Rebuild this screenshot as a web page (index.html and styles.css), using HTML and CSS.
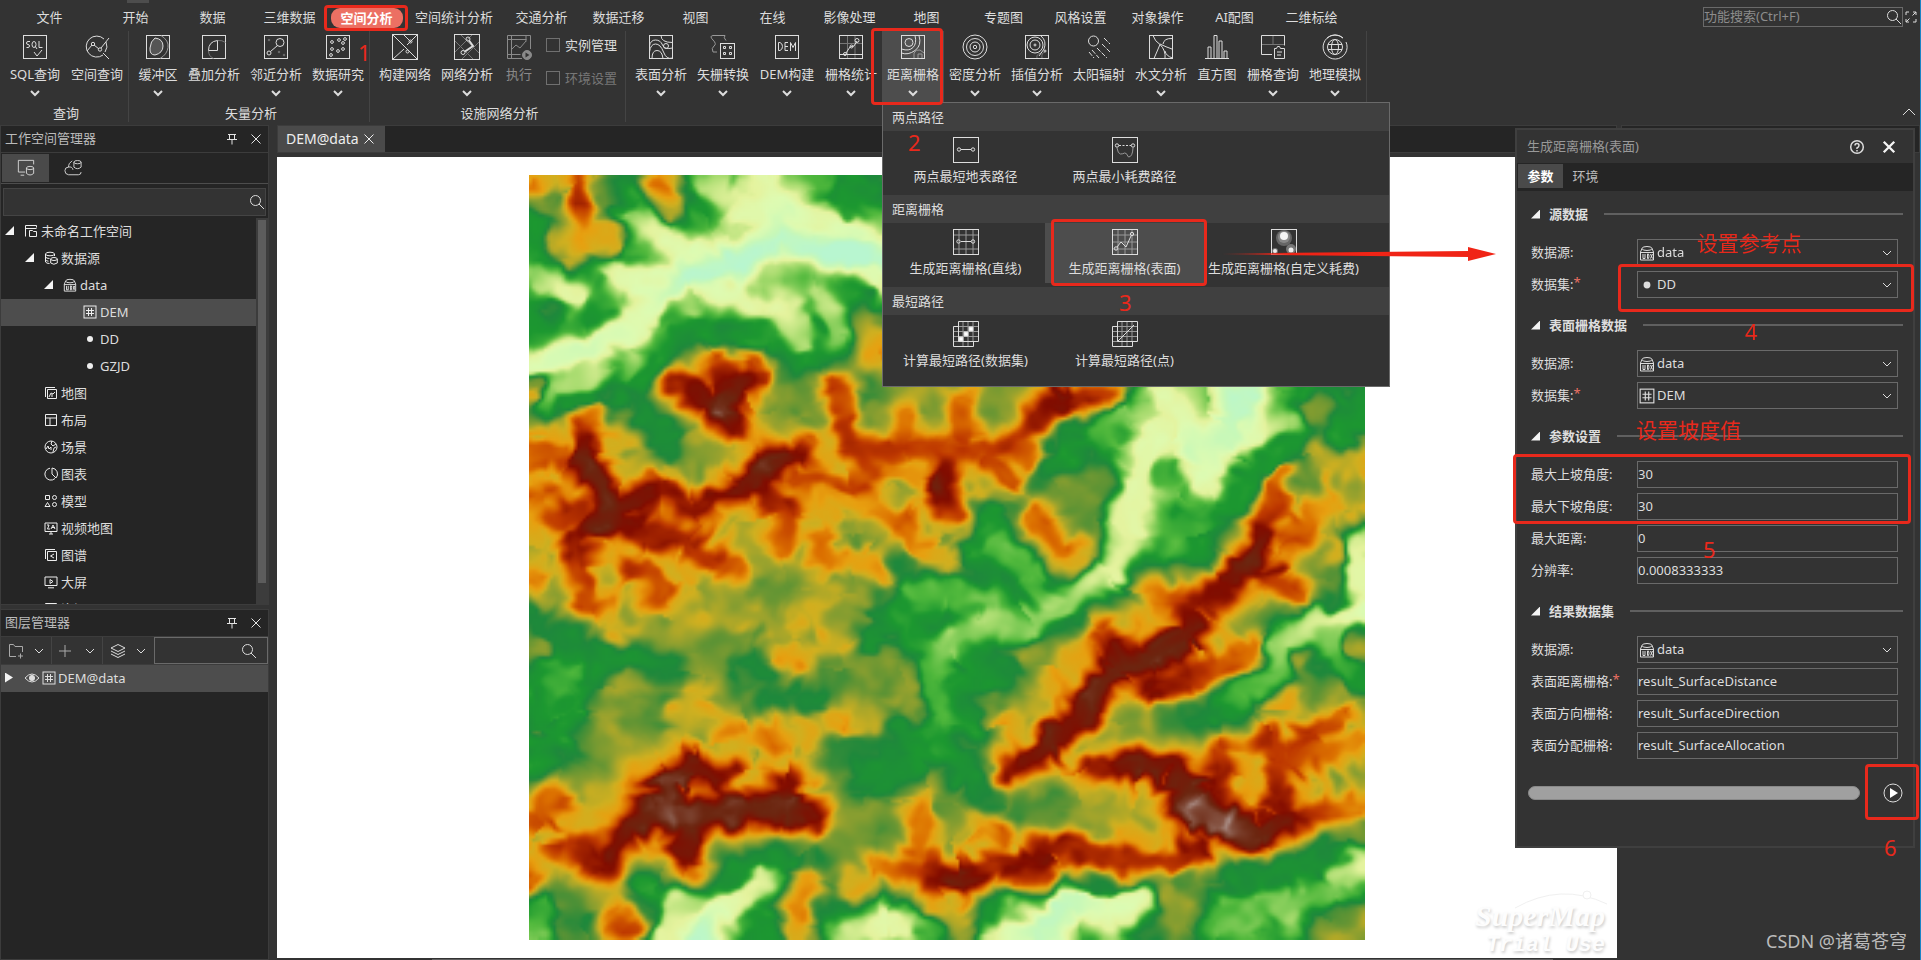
FILE: index.html
```html
<!DOCTYPE html>
<html lang="zh-CN">
<head>
<meta charset="utf-8">
<title>SuperMap iDesktopX</title>
<link rel="stylesheet" href="styles.css">
</head>
<body>
<svg class="sprite" aria-hidden="true">
  <symbol id="i-sql" viewBox="0 0 26 26"><rect x="1.500" y="1.500" width="23" height="23"/><path d="M8 7.500H6q-1.500 0-1.500 1.500T6 10.500 7.500 12 6 13.500H4.500M12 7.500q2 0 2 3t-2 3-2-3 2-3M13 12l2 3M17 7v6.500h3.500M12 18l3 4 5-6"/></symbol>
  <symbol id="i-spaceq" viewBox="0 0 26 26"><path d="M20 5A10.500 10.500 0 1 0 19 21M22 8a10 10 0 0 1-1 10M19 19l6 6M3 17l5-6M10 11l5 4M17 14l8-10"/><circle cx="9" cy="10" r="1.700"/><circle cx="16" cy="15.500" r="1.700"/></symbol>
  <symbol id="i-buffer" viewBox="0 0 26 26"><rect x="1.500" y="1.500" width="23" height="23"/><path d="M16 1.500q8 5 7 12t-8 11" class="dimmer"/><path d="M10 4q8 1 8 8t-8 9Q4.500 21 5 14t5-10z" class="shade"/></symbol>
  <symbol id="i-overlay" viewBox="0 0 26 26"><rect x="1.500" y="1.500" width="23" height="23"/><path d="M16.500 6.500v10h-9q0-9 9-10z"/><path d="M7.500 17q0 5 5 7.500M17 6.500q4-.5 7.500 2" class="dim"/></symbol>
  <symbol id="i-near" viewBox="0 0 26 26"><rect x="1.500" y="1.500" width="23" height="23"/><circle cx="17" cy="8.500" r="4"/><circle cx="6" cy="19" r="2"/><path d="M7.500 17.500l7-6"/><g class="dim"><circle cx="6" cy="6" r=".8"/><circle cx="16" cy="18" r=".8"/><circle cx="21" cy="21" r=".8"/></g></symbol>
  <symbol id="i-study" viewBox="0 0 26 26"><rect x="1.500" y="1.500" width="23" height="23"/><circle cx="7" cy="8" r="1.400"/><circle cx="14" cy="6" r="1.400"/><circle cx="20" cy="5" r="1.400"/><circle cx="18" cy="9" r="1.400"/><circle cx="7" cy="15" r="1.400"/><circle cx="13" cy="17" r="1.400"/><circle cx="18" cy="15" r="1.400"/><circle cx="6" cy="21" r="1.400"/></symbol>
  <symbol id="i-buildnet" viewBox="0 0 26 26"><rect x=".5" y=".5" width="25" height="25"/><path d="M1 1l24 24M25 1L15 11M12 15L1 25M12 1l6 6"/><circle cx="18.500" cy="7.500" r="1.500"/><circle cx="15.500" cy="17.500" r="1.500"/></symbol>
  <symbol id="i-netana" viewBox="0 0 26 26"><path d="M1 7l18 18M1 18L18 1M7 1l18 18M8 25L25 8" class="dim"/><rect x=".5" y=".5" width="25" height="25"/><path d="M15 6.500l4 5.500-8 5.500" class="bold"/><circle cx="14" cy="5" r="2"/><circle cx="9" cy="18.500" r="2"/></symbol>
  <symbol id="i-exec" viewBox="0 0 26 26"><path d="M16 24.500H1.500v-23h23V15M5.500 1.500v23M1.500 5.500h19M20 1.500v6M1.500 20.500h13M6 15l4-4 4 3 6-7"/><circle cx="21" cy="21" r="4.500" fill="currentColor"/><path d="M19.500 18.500l4 2.500-4 2.500z" fill="#333" stroke="none"/></symbol>
  <symbol id="i-surface" viewBox="0 0 26 26"><rect x="1.500" y="1.500" width="23" height="23"/><path d="M1.500 12q1-6 6-6t7 5 10 3M1.500 18q1-8 6-8t8 8 9 6M4 24.500q0-8 5-8t6 8M13 1.500q0 7 11.500 7"/><circle cx="18" cy="12" r="2.500"/></symbol>
  <symbol id="i-convert" viewBox="0 0 26 26"><path d="M7 18H3q-2-4 1-6T3 6t0-4.500h12q-2 2 1 5" class="dimmer"/><rect x="10.500" y="9.500" width="14" height="15"/><path d="M13.500 12.500h2v2h-2zM19.500 12.500h2v2h-2zM13.500 18.500h2v2h-2zM19.500 18.500h2v2h-2z"/></symbol>
  <symbol id="i-dem" viewBox="0 0 26 26"><rect x="1.500" y="1.500" width="23" height="23"/><path d="M4.500 8.500v8h1.500q2.500-1 2.500-4t-2.500-4zM14 8.500h-3v8h3M11 12.500h3M16.500 17V8.500l2.500 5 2.500-5V17"/></symbol>
  <symbol id="i-stat" viewBox="0 0 26 26"><path d="M9.500 2v22M2 9.500h22M17 2v22" class="dim"/><rect x="1.500" y="1.500" width="23" height="23"/><path d="M1.500 20.500h23M8 19l4-6 4-1 3-5"/><circle cx="7" cy="20" r="1.500"/><circle cx="13.500" cy="12.500" r="1.500"/><circle cx="19" cy="6.500" r="2"/></symbol>
  <symbol id="i-dist" viewBox="0 0 26 26"><path d="M14 24v-5q2-4 6-3l4 3M18 24v-4h4v4" class="dimmer"/><rect x="1.500" y="1.500" width="23" height="23"/><circle cx="9" cy="8.500" r="4" class="shade"/><path d="M15 1.500q2 8-2 12T1.500 15M19 1.500q3 10-4 15T1.500 19"/></symbol>
  <symbol id="i-density" viewBox="0 0 26 26"><circle cx="13" cy="13" r="12"/><circle cx="13" cy="13" r="8.500"/><circle cx="13" cy="13" r="5"/><circle cx="13" cy="13" r="1.700"/></symbol>
  <symbol id="i-interp" viewBox="0 0 26 26"><path d="M18 24q-1-5 3-6M13 24q-1-4 4-5" class="dim"/><rect x="1.500" y="1.500" width="23" height="23"/><circle cx="11" cy="11" r="8"/><circle cx="11" cy="11" r="5"/><circle cx="11" cy="11" r="1"/><path d="M17 2q6 5 3 13l-5 7"/><circle cx="21" cy="17" r="1"/></symbol>
  <symbol id="i-sun" viewBox="0 0 26 26"><circle cx="7.500" cy="7" r="5"/><path d="M18 4l6 6M16 10l8 8M11 14l10 10M6 16l7 8M3 18l5 6" stroke-dasharray="5 1.500"/></symbol>
  <symbol id="i-hydro" viewBox="0 0 26 26"><rect x="1.500" y="1.500" width="23" height="23"/><path d="M5 1.500q2 6 7 9l-6 14M12 10.500q6 6 5 14M12 10q6 3 12 5M15 10q1-6 9.500-5.500M17 17q1 5 7.500 7"/></symbol>
  <symbol id="i-histo" viewBox="0 0 26 26"><path d="M1 24.500h24M4 24V13h3v11M10 24V1.500h3V24M15 24V7h3v17M20 24v-7h3v7"/></symbol>
  <symbol id="i-rquery" viewBox="0 0 26 26"><path d="M13 2v9M2 10.500h22" class="dim"/><path d="M12 20.500H1.500v-19h23v10M14.500 14.500h2l1-2h2l1 2h4v10h-10zM17 18h5M17 21h4"/></symbol>
  <symbol id="i-geosim" viewBox="0 0 26 26"><path d="M21 4A12 12 0 1 0 24 8M5 4a12 12 0 0 1 16 0"/><circle cx="13" cy="13" r="7.500"/><ellipse cx="13" cy="13" rx="3.500" ry="7.500"/><path d="M6 10.500h14M6 15.500h14"/></symbol>
  <symbol id="i-chev" viewBox="0 0 12 12"><path d="M2 4l4 4 4-4"/></symbol>
  <symbol id="i-search" viewBox="0 0 16 16"><circle cx="6.500" cy="6.500" r="5"/><path d="M10 10l5 5"/></symbol>
  <symbol id="i-x" viewBox="0 0 12 12"><path d="M1.500 1.500l9 9M10.500 1.500l-9 9"/></symbol>
  <symbol id="i-pin" viewBox="0 0 12 12"><path d="M2 1.500h8M3.500 1.500v5M8.500 1.500v5M1 6.500h10M6 6.500v5"/></symbol>
  <symbol id="i-plus" viewBox="0 0 12 12"><path d="M6 0v12M0 6h12"/></symbol>
  <symbol id="i-expand" viewBox="0 0 12 12"><path d="M1 4V1h3M8 1h3v3M11 8v3H8M4 11H1V8M1 11l3.500-3.500M11 1L7.500 4.500"/></symbol>
  <symbol id="i-wsp" viewBox="0 0 14 14"><path d="M1.500 12.500v-11h11v2M1.500 4.500h11M5.500 12.500v-6h3l1 1h3v5z"/></symbol>
  <symbol id="i-dbs" viewBox="0 0 14 14"><ellipse cx="6" cy="3" rx="4.500" ry="1.800"/><path d="M1.500 3v8q1 1.500 4 1.500M1.500 6q1 1.500 4 1.500M1.500 9q1 1 3 1.200M10.500 3v2"/><ellipse cx="10" cy="8" rx="3.300" ry="1.500"/><path d="M6.700 8v4q3 2.500 6.600 0V8"/></symbol>
  <symbol id="i-udb" viewBox="0 0 16 16"><ellipse cx="8" cy="3.500" rx="5" ry="2"/><path d="M3 3.500L1.500 7v8h13V7L13 3.500M1.500 7.500h13M4 9v4.500h2V9M8.500 9v4.500M8.500 9h1q1 2.200 0 4.500h-1M11.500 9l2 4.500M13.500 9l-2 4.500"/></symbol>
  <symbol id="i-grid" viewBox="0 0 14 14"><rect x="1" y="1" width="12" height="12"/><path d="M5.500 3v8M8.500 3v8M3 5.500h8M3 8.500h8"/></symbol>
  <symbol id="i-dot" viewBox="0 0 14 14"><circle cx="7" cy="7" r="3" fill="currentColor" stroke="none"/></symbol>
  <symbol id="i-map" viewBox="0 0 14 14"><path d="M1.500 11V1.500H11M3.500 3.500h9v9h-9zM5 11l2-4 2 1 2-2M8 11v-3"/></symbol>
  <symbol id="i-layout" viewBox="0 0 14 14"><path d="M1.500 1.500h11v11h-11zM1.500 5h11M6 5v7.500"/></symbol>
  <symbol id="i-scene" viewBox="0 0 14 14"><circle cx="7" cy="7" r="6"/><path d="M2 9l2-3 1 3 2-2v3M8 1l-1 3 2 2 3-2M9 12l1-4 2-1"/></symbol>
  <symbol id="i-chart" viewBox="0 0 14 14"><path d="M6 1.200A6 6 0 1 0 11 11.500M8 1v6l4 4a6 6 0 0 0-4-10z"/></symbol>
  <symbol id="i-model" viewBox="0 0 14 14"><path d="M1.500 1.500h4v4h-4zM3.500 8.500l2.500 4H1z"/><circle cx="10.500" cy="3.500" r="2"/><circle cx="10.500" cy="10.500" r="2"/></symbol>
  <symbol id="i-video" viewBox="0 0 14 14"><path d="M1 2h12v8.500H1zM5 13h4M3 4h2L3.500 8H6M7 8l2-4 2 4M8 6.500h3M7 10.500V13"/></symbol>
  <symbol id="i-graph" viewBox="0 0 14 14"><path d="M1.500 11V1.500H11M3.500 3.500h9v9h-9zM10 6L6.500 8l3.500 2"/></symbol>
  <symbol id="i-screen" viewBox="0 0 14 14"><path d="M1 2h12v8.500H1zM4 12.800h6M6 4.500v4l3-2z"/></symbol>
  <symbol id="i-folder" viewBox="0 0 16 16"><path d="M8 13.500H1.500v-12h4l1.500 2h7.500V9M12.500 10.500v5M10 13h5"/></symbol>
  <symbol id="i-layers" viewBox="0 0 16 16"><path d="M8 1.500L15 5 8 8.500 1 5zM1 8l7 3.500L15 8M1 11l7 3.500 7-3.500"/></symbol>
  <symbol id="i-eye" viewBox="0 0 16 16"><path d="M1 8q7-8 14 0-7 8-14 0z"/><circle cx="8" cy="8" r="2.600" fill="currentColor"/></symbol>
  <symbol id="i-local" viewBox="0 0 20 20"><path d="M9 14.500H1.500v-13h17V6M4 18h4"/><ellipse cx="14.500" cy="10" rx="4" ry="1.800"/><path d="M10.500 10v6q4 3.500 8 0v-6"/></symbol>
  <symbol id="i-cloud" viewBox="0 0 20 20"><path d="M6 5q-1 2-1 4-4 0-4 4t4 4.500h11q3 0 3-3M5 9q4-1 5 3M6 5l3-3"/><ellipse cx="15" cy="3.500" rx="4" ry="1.800"/><path d="M11 3.500V9q4 3.500 8 0V3.500"/></symbol>
  <symbol id="i-tp1" viewBox="0 0 26 26"><rect x=".5" y=".5" width="25" height="25"/><path d="M8 12.500h10"/><circle cx="6" cy="12.500" r="1.700"/><circle cx="20" cy="12.500" r="1.700"/></symbol>
  <symbol id="i-tp2" viewBox="0 0 26 26"><rect x=".5" y=".5" width="25" height="25"/><path d="M7 8.500h12" stroke-dasharray="2 1.500"/><circle cx="5" cy="8.500" r="1.700"/><circle cx="21" cy="8.500" r="1.700"/><path d="M5 11q1 6 3.500 6t4-1 4 4q4 0 4.500-9" class="dimmer"/></symbol>
  <symbol id="i-g1" viewBox="0 0 26 26"><path d="M6 1v24M13 1v24M20 1v24M1 6h24M1 20h24" class="dimmer"/><rect x=".5" y=".5" width="25" height="25"/><path d="M8 12.500h10"/><circle cx="5.500" cy="12.500" r="1.700"/><circle cx="20" cy="12.500" r="1.700"/></symbol>
  <symbol id="i-g2" viewBox="0 0 26 26"><path d="M6 1v24M13 1v24M20 1v24M1 6h24M1 13h24M1 20h24" class="dimmer"/><rect x=".5" y=".5" width="25" height="25"/><path d="M5 18l4-5 5 5 5-11"/><circle cx="4" cy="19.500" r="1.700"/><circle cx="20" cy="5" r="1.700"/></symbol>
  <symbol id="i-g3" viewBox="0 0 26 26"><rect x=".5" y=".5" width="25" height="25"/><g stroke="none"><circle cx="13" cy="9" r="8" fill="#666"/><circle cx="13" cy="8" r="6" fill="#888"/><circle cx="13" cy="7" r="4" fill="#f4f4f4"/><circle cx="20" cy="20" r="5" fill="#777"/><circle cx="20" cy="21" r="2.500" fill="#eee"/><circle cx="4" cy="22" r="3" fill="#777"/><circle cx="4" cy="22" r="2" fill="#eee"/></g></symbol>
  <symbol id="i-s1" viewBox="0 0 26 26"><path d="M10 1v19M15 1v24M20 1v19M5 5.500h20M1 10.500h24M1 15.500h24M10 20v5M1 20.500h6" class="dimmer"/><path d="M5.500.5h20v20h-20zM5.500 5.500h-5v20h20v-5"/><path d="M16 6h4v4h-4zM11 11h4v4h-4zM6 16h4v4H6z" fill="#fff"/></symbol>
  <symbol id="i-s2" viewBox="0 0 26 26"><path d="M10 1v19M15 1v24M20 1v19M5 5.500h20M1 10.500h24M1 15.500h24M10 20v5M1 20.500h6" class="dimmer"/><path d="M5.500.5h20v20h-20zM5.500 5.500h-5v20h20v-5M6 20L22 4"/></symbol>
</svg>

<div class="app">
  <header class="ribbon">
    <div class="titlebar">
      <nav class="tabs">
        <a class="tab tab-file" href="#">文件</a><a class="tab" href="#">开始</a><a class="tab" href="#">数据</a><a class="tab" href="#">三维数据</a><a class="tab active" href="#"><span>空间分析</span></a><a class="tab tab-wide" href="#">空间统计分析</a><a class="tab" href="#">交通分析</a><a class="tab" href="#">数据迁移</a><a class="tab" href="#">视图</a><a class="tab" href="#">在线</a><a class="tab" href="#">影像处理</a><a class="tab" href="#">地图</a><a class="tab" href="#">专题图</a><a class="tab" href="#">风格设置</a><a class="tab" href="#">对象操作</a><a class="tab" href="#">AI配图</a><a class="tab" href="#">二维标绘</a>
      </nav>
      <div class="find"><input type="text" aria-label="功能搜索" placeholder="功能搜索(Ctrl+F)"><svg class="ic16"><use href="#i-search"/></svg></div>
      <button class="bare" aria-label="全屏"><svg class="ic12"><use href="#i-expand"/></svg></button>
    </div>
    <div class="groups">
      <section class="group query">
        <div class="tools">
          <button class="tool"><svg><use href="#i-sql"/></svg><span>SQL查询</span><svg class="chev"><use href="#i-chev"/></svg></button>
          <button class="tool"><svg><use href="#i-spaceq"/></svg><span>空间查询</span></button>
        </div>
        <h2>查询</h2>
      </section>
      <section class="group">
        <div class="tools">
          <button class="tool t3"><svg><use href="#i-buffer"/></svg><span>缓冲区</span><svg class="chev"><use href="#i-chev"/></svg></button>
          <button class="tool"><svg><use href="#i-overlay"/></svg><span>叠加分析</span></button>
          <button class="tool"><svg><use href="#i-near"/></svg><span>邻近分析</span><svg class="chev"><use href="#i-chev"/></svg></button>
          <button class="tool"><svg><use href="#i-study"/></svg><span>数据研究</span><svg class="chev"><use href="#i-chev"/></svg></button>
        </div>
        <h2>矢量分析</h2>
      </section>
      <section class="group">
        <div class="tools">
          <button class="tool"><svg><use href="#i-buildnet"/></svg><span>构建网络</span></button>
          <button class="tool"><svg><use href="#i-netana"/></svg><span>网络分析</span><svg class="chev"><use href="#i-chev"/></svg></button>
          <button class="tool t2" disabled><svg><use href="#i-exec"/></svg><span>执行</span></button>
          <div class="checks">
            <label><input type="checkbox">实例管理</label>
            <label class="off"><input type="checkbox" disabled>环境设置</label>
          </div>
        </div>
        <h2>设施网络分析</h2>
      </section>
      <section class="group">
        <div class="tools">
          <button class="tool"><svg><use href="#i-surface"/></svg><span>表面分析</span><svg class="chev"><use href="#i-chev"/></svg></button>
          <button class="tool"><svg><use href="#i-convert"/></svg><span>矢栅转换</span><svg class="chev"><use href="#i-chev"/></svg></button>
          <button class="tool t5"><svg><use href="#i-dem"/></svg><span>DEM构建</span><svg class="chev"><use href="#i-chev"/></svg></button>
          <button class="tool"><svg><use href="#i-stat"/></svg><span>栅格统计</span><svg class="chev"><use href="#i-chev"/></svg></button>
          <div class="drop">
            <button class="tool open"><svg><use href="#i-dist"/></svg><span>距离栅格</span><svg class="chev"><use href="#i-chev"/></svg></button>
            <div class="mark mark-drop"></div>
            <div class="menu">
              <h3>两点路径</h3>
              <div class="choices">
                <button><svg><use href="#i-tp1"/></svg><span>两点最短地表路径</span></button>
                <button><svg><use href="#i-tp2"/></svg><span>两点最小耗费路径</span></button>
              </div>
              <h3>距离栅格</h3>
              <div class="choices">
                <button><svg><use href="#i-g1"/></svg><span>生成距离栅格(直线)</span></button>
                <button class="hover"><svg><use href="#i-g2"/></svg><span>生成距离栅格(表面)</span></button>
                <button><svg><use href="#i-g3"/></svg><span>生成距离栅格(自定义耗费)</span></button>
              </div>
              <h3>最短路径</h3>
              <div class="choices">
                <button><svg><use href="#i-s1"/></svg><span>计算最短路径(数据集)</span></button>
                <button><svg><use href="#i-s2"/></svg><span>计算最短路径(点)</span></button>
              </div>
              <div class="mark mark-item"></div>
              <b class="num n2">2</b><b class="num n3">3</b>
              <svg class="arrow" viewBox="0 0 274 16"><defs><linearGradient id="fade"><stop offset="0" stop-color="#f02416" stop-opacity="0"/><stop offset=".25" stop-color="#f02416"/></linearGradient></defs><path d="M0 7.500L246 5V1l28 7-28 7v-4L0 8.500z" fill="url(#fade)"/></svg>
            </div>
          </div>
          <button class="tool"><svg><use href="#i-density"/></svg><span>密度分析</span><svg class="chev"><use href="#i-chev"/></svg></button>
          <button class="tool"><svg><use href="#i-interp"/></svg><span>插值分析</span><svg class="chev"><use href="#i-chev"/></svg></button>
          <button class="tool"><svg><use href="#i-sun"/></svg><span>太阳辐射</span></button>
          <button class="tool"><svg><use href="#i-hydro"/></svg><span>水文分析</span><svg class="chev"><use href="#i-chev"/></svg></button>
          <button class="tool t3"><svg><use href="#i-histo"/></svg><span>直方图</span></button>
          <button class="tool"><svg><use href="#i-rquery"/></svg><span>栅格查询</span><svg class="chev"><use href="#i-chev"/></svg></button>
          <button class="tool"><svg><use href="#i-geosim"/></svg><span>地理模拟</span><svg class="chev"><use href="#i-chev"/></svg></button>
        </div>
      </section>
      <button class="bare collapse" aria-label="折叠"><svg class="ic16" viewBox="0 0 16 16"><path d="M2 11l6-6 6 6"/></svg></button>
    </div>
    <div class="mark mark-tab"></div>
    <b class="num n1">1</b>
  </header>

  <div class="work">
    <aside class="side">
      <section class="panel">
        <div class="phead"><h2>工作空间管理器</h2><button class="bare" aria-label="固定"><svg class="ic12"><use href="#i-pin"/></svg></button><button class="bare" aria-label="关闭"><svg class="ic12"><use href="#i-x"/></svg></button></div>
        <div class="ptabs"><button class="on" aria-label="本地"><svg><use href="#i-local"/></svg></button><button aria-label="在线"><svg><use href="#i-cloud"/></svg></button></div>
        <div class="psearch"><input type="text" aria-label="搜索"><svg class="ic16"><use href="#i-search"/></svg></div>
        <div class="treebox">
          <ul class="tree">
            <li><i class="tri"></i><svg><use href="#i-wsp"/></svg>未命名工作空间</li>
            <li class="l1"><i class="tri"></i><svg><use href="#i-dbs"/></svg>数据源</li>
            <li class="l2"><i class="tri"></i><svg><use href="#i-udb"/></svg>data</li>
            <li class="l3 picked"><i></i><svg><use href="#i-grid"/></svg>DEM</li>
            <li class="l3"><i></i><svg><use href="#i-dot"/></svg>DD</li>
            <li class="l3"><i></i><svg><use href="#i-dot"/></svg>GZJD</li>
            <li class="l1"><i></i><svg><use href="#i-map"/></svg>地图</li>
            <li class="l1"><i></i><svg><use href="#i-layout"/></svg>布局</li>
            <li class="l1"><i></i><svg><use href="#i-scene"/></svg>场景</li>
            <li class="l1"><i></i><svg><use href="#i-chart"/></svg>图表</li>
            <li class="l1"><i></i><svg><use href="#i-model"/></svg>模型</li>
            <li class="l1"><i></i><svg><use href="#i-video"/></svg>视频地图</li>
            <li class="l1"><i></i><svg><use href="#i-graph"/></svg>图谱</li>
            <li class="l1"><i></i><svg><use href="#i-screen"/></svg>大屏</li>
            <li class="l1"><i class="tri"></i><svg><use href="#i-wsp"/></svg>资源</li>
          </ul>
          <div class="track"><div class="thumb"></div></div>
        </div>
      </section>
      <section class="panel layers">
        <div class="phead"><h2>图层管理器</h2><button class="bare" aria-label="固定"><svg class="ic12"><use href="#i-pin"/></svg></button><button class="bare" aria-label="关闭"><svg class="ic12"><use href="#i-x"/></svg></button></div>
        <div class="ltools">
          <button aria-label="新建分组"><svg class="ic16 soft"><use href="#i-folder"/></svg><svg class="ic12"><use href="#i-chev"/></svg></button>
          <button aria-label="添加"><svg class="ic12 soft"><use href="#i-plus"/></svg><svg class="ic12"><use href="#i-chev"/></svg></button>
          <button aria-label="图层"><svg class="ic16"><use href="#i-layers"/></svg><svg class="ic12"><use href="#i-chev"/></svg></button>
          <div class="lsearch"><input type="text" aria-label="图层搜索"><svg class="ic16"><use href="#i-search"/></svg></div>
        </div>
        <div class="layer"><i></i><svg class="ic16"><use href="#i-eye"/></svg><svg class="ic14"><use href="#i-grid"/></svg><span>DEM@data</span></div>
      </section>
    </aside>

    <main class="doc">
      <div class="dtabs"><button>DEM@data <svg class="ic12"><use href="#i-x"/></svg></button></div>
      <div class="canvas">
        <canvas id="terrain" width="280" height="256"></canvas>
        <div class="brand"><svg viewBox="0 0 100 20"><path d="M4 18Q50-8 96 14"/><circle cx="76" cy="5" r="4"/></svg><em>SuperMap</em><b>Trial Use</b></div>
      </div>
    </main>
    <aside class="right"><div></div></aside>
  </div>

  <form class="dialog">
    <div class="dtitle"><h2>生成距离栅格(表面)</h2>
      <button type="button" class="bare" aria-label="帮助"><svg class="ic16" viewBox="0 0 16 16" stroke-width="1.500"><circle cx="8" cy="8" r="6.300"/><path d="M6 6.500q0-2 2-2t2 1.800-2 2.700V10M8 11v1.500"/></svg></button>
      <button type="button" class="bare" aria-label="关闭"><svg class="ic14 heavy"><use href="#i-x"/></svg></button></div>
    <div class="dstrip"><button type="button" class="on">参数</button><button type="button">环境</button></div>
    <div class="fields">
      <h3><i class="tri"></i>源数据</h3>
      <div class="row"><label for="s1">数据源:</label><div class="pick"><svg class="ic16"><use href="#i-udb"/></svg><select id="s1"><option>data</option></select><svg class="ic12"><use href="#i-chev"/></svg></div></div>
      <div class="row"><label for="s2">数据集:<sup>*</sup></label><div class="pick"><svg class="ic16"><use href="#i-dot"/></svg><select id="s2"><option>DD</option></select><svg class="ic12"><use href="#i-chev"/></svg></div></div>
      <h3><i class="tri"></i>表面栅格数据</h3>
      <div class="row"><label for="s3">数据源:</label><div class="pick"><svg class="ic16"><use href="#i-udb"/></svg><select id="s3"><option>data</option></select><svg class="ic12"><use href="#i-chev"/></svg></div></div>
      <div class="row"><label for="s4">数据集:<sup>*</sup></label><div class="pick"><svg class="ic16"><use href="#i-grid"/></svg><select id="s4"><option>DEM</option></select><svg class="ic12"><use href="#i-chev"/></svg></div></div>
      <h3><i class="tri"></i>参数设置</h3>
      <div class="row"><label for="p1">最大上坡角度:</label><input id="p1" type="text" value="30"></div>
      <div class="row"><label for="p2">最大下坡角度:</label><input id="p2" type="text" value="30"></div>
      <div class="row"><label for="p3">最大距离:</label><input id="p3" type="text" value="0"></div>
      <div class="row"><label for="p4">分辨率:</label><input id="p4" type="text" value="0.0008333333"></div>
      <h3><i class="tri"></i>结果数据集</h3>
      <div class="row"><label for="s5">数据源:</label><div class="pick"><svg class="ic16"><use href="#i-udb"/></svg><select id="s5"><option>data</option></select><svg class="ic12"><use href="#i-chev"/></svg></div></div>
      <div class="row"><label for="r1">表面距离栅格:<sup>*</sup></label><input id="r1" type="text" value="result_SurfaceDistance"></div>
      <div class="row"><label for="r2">表面方向栅格:</label><input id="r2" type="text" value="result_SurfaceDirection"></div>
      <div class="row"><label for="r3">表面分配栅格:</label><input id="r3" type="text" value="result_SurfaceAllocation"></div>
    </div>
    <div class="run"><div class="bar"></div><button type="button" class="bare" aria-label="执行"><svg class="ic20" viewBox="0 0 20 20"><circle cx="10" cy="10" r="9"/><path d="M7 5l8 5-8 5z" fill="#fff" stroke="none"/></svg></button></div>
    <div class="mark mark-set"></div><div class="mark mark-slope"></div><div class="mark mark-run"></div>
    <b class="num note-ref">设置参考点</b><b class="num note-slope">设置坡度值</b>
    <b class="num n4">4</b><b class="num n5">5</b><b class="num n6">6</b>
  </form>
  <div class="credit">CSDN @诸葛苍穹</div>
</div>
<script src="terrain.js"></script>
</body>
</html>
```
FILE: styles.css
```css
* { box-sizing: border-box; margin: 0; }
html, body { height: 100%; }
body { background: #333; color: #ddd; font: 13px/20px "Noto Sans", "Noto Sans CJK SC", sans-serif; overflow: hidden; }
button, input, select { font: inherit; color: inherit; background: none; border: 0; padding: 0; border-radius: 0; outline: 0; min-width: 0; }
h2, h3 { font-size: 13px; font-weight: 400; }
ul { list-style: none; padding: 0; }
a { color: inherit; text-decoration: none; }
svg { fill: none; stroke: currentColor; display: block; flex: none; overflow: visible; }
.sprite { position: absolute; width: 0; height: 0; }
.dim { stroke: #777; }
.dimmer { stroke: #999; }
.shade { fill: #555; }
.bold { stroke-width: 2; }
.ic12 { width: 12px; height: 12px; }
.ic14 { width: 14px; height: 14px; }
.ic16 { width: 16px; height: 16px; }
.ic20 { width: 20px; height: 20px; }
.soft { color: #aaa; }
.heavy { stroke-width: 2; color: #f4f4f4; }
.bare { display: grid; place-items: center; }

.app { position: relative; height: 100vh; display: flex; flex-direction: column; border-right: 1px solid #1c84c6; }
.ribbon { position: relative; z-index: 2; height: 125px; flex: none; }
.ribbon::before { content: ""; position: absolute; left: 127px; top: 0; width: 22px; height: 3px; background: #4d4d4d; }
.titlebar { display: flex; align-items: flex-start; height: 31px; padding: 7px 3px 0 2px; }
.tabs { display: flex; flex: 1; }
.tab { width: 77px; text-align: center; line-height: 20px; white-space: nowrap; }
.tab-file { width: 95px; }
.tab-wide { width: 98px; }
.tab.active span { display: block; width: 72px; margin: 1px auto 0; line-height: 20px; border-radius: 9px; background: #ec7063; color: #fff; font-weight: 700; }
.find { display: flex; align-items: center; width: 200px; height: 20px; border: 1px solid #6a6a6a; margin-right: 2px; }
.find input { flex: 1; height: 18px; padding-bottom: 2px; }
.find input::placeholder { color: #8c8c8c; opacity: 1; }
.titlebar .bare { height: 20px; }
.groups { display: flex; height: 93px; position: relative; }
.group { display: flex; flex-direction: column; padding: 0 0 0 4px; border-right: 1px solid #444; height: 91px; }
.group h2 { text-align: center; margin-top: 1px; }
.tools { display: flex; height: 71px; }
.tool { width: 62px; height: 71px; padding-top: 3px; display: flex; flex-direction: column; align-items: center; white-space: nowrap; }
.tool svg { width: 26px; height: 26px; }
.tool span { margin-top: 4px; line-height: 20px; }
.tool .chev { width: 12px; height: 12px; margin-top: 3px; stroke-width: 2; }
.tool:disabled { color: #8a8a8a; }
.t2 { width: 42px; }
.t3 { width: 50px; }
.t5 { width: 66px; }
.open { background: #4d4d4d; }
.checks { padding: 4px 8px 0 6px; display: flex; flex-direction: column; gap: 13px; }
.checks label { display: flex; align-items: center; gap: 5px; white-space: nowrap; }
.checks input { appearance: none; width: 14px; height: 14px; border: 1px solid #707070; }
.checks .off { color: #777; }
.collapse { position: absolute; right: 3px; bottom: 4px; }

.drop { position: relative; }
.menu { position: absolute; top: 100%; left: 0; width: 508px; height: 285px; background: #333; border: 1px solid #6a6a6a; }
.menu h3 { background: #404040; height: 28px; line-height: 28px; padding-left: 9px; }
.choices { display: flex; height: 64px; padding-left: 3px; }
.choices button { width: 159px; height: 60px; padding-top: 6px; display: flex; flex-direction: column; align-items: center; white-space: nowrap; }
.choices svg { width: 26px; height: 26px; }
.choices span { margin-top: 3px; }
.choices .hover { background: #4d4d4d; }

.mark { position: absolute; border: 3px solid #e8291c; border-radius: 4px; pointer-events: none; }
.mark-tab { left: 324px; top: 5px; width: 84px; height: 26px; }
.mark-drop { left: -11px; top: -3px; width: 72px; height: 77px; z-index: 1; }
.mark-item { left: 168px; top: 116px; width: 156px; height: 67px; }
.num { position: absolute; color: #e8291c; font-size: 22px; line-height: 24px; font-weight: 400; white-space: nowrap; }
.n1 { left: 358px; top: 40px; }
.n2 { left: 25px; top: 27px; }
.n3 { left: 236px; top: 187px; }
.arrow { position: absolute; left: 339px; top: 143px; width: 274px; height: 16px; stroke: none; }

.work { flex: 1; min-height: 0; display: flex; }
.side { width: 269px; margin-right: 8px; display: flex; flex-direction: column; gap: 4px; border-left: 1px solid #3c3c3c; }
.panel { background: #252525; border: 1px solid #3c3c3c; border-left: 0; height: 480px; display: flex; flex-direction: column; }
.layers { flex: 1; height: auto; }
.phead { display: flex; align-items: center; height: 27px; padding: 0 6px 0 4px; gap: 12px; border-bottom: 1px solid #3c3c3c; color: #e4e4e4; flex: none; }
.phead h2 { flex: 1; color: #bbb; padding-bottom: 2px; }
.ptabs { display: flex; height: 31px; padding: 1px; border-bottom: 1px solid #4d4d4d; flex: none; }
.ptabs button { width: 47px; display: grid; place-items: center; }
.ptabs svg { width: 20px; height: 18px; }
.ptabs .on { background: #4a4a4a; }
.psearch { display: flex; align-items: center; height: 28px; margin: 4px 2px 2px; background: #333; border: 1px solid #444; flex: none; }
.psearch input { flex: 1; }
.treebox { display: flex; flex: 1; min-height: 0; overflow: hidden; }
.tree { flex: 1; }
.tree li { display: flex; align-items: center; height: 27px; padding: 0 0 2px 4px; }
.tree .l1 { padding-left: 24px; }
.tree .l2 { padding-left: 43px; }
.tree .l3 { padding-left: 63px; }
.tree .picked { background: #4d4d4d; }
.tree i { width: 9px; margin-right: 10px; }
.tree svg { width: 14px; height: 14px; margin-right: 3px; color: #eee; }
.tri { width: 9px; height: 9px; background: #f4f4f4; clip-path: polygon(100% 0, 100% 100%, 0 100%); }
.track { width: 12px; background: #3c3c3c; padding: 2px; }
.thumb { height: 95%; background: #5c5c5c; }
.ltools { display: flex; height: 28px; background: #333; flex: none; border-bottom: 1px solid #3c3c3c; }
.ltools button { display: flex; flex: none; align-items: center; justify-content: center; gap: 9px; width: 51px; border-right: 1px solid #444; }
.ltools button:nth-child(2) { gap: 13px; }
.ltools button:nth-child(3) { border-right: 0; }
.lsearch { flex: 1; min-width: 0; display: flex; align-items: center; border: 1px solid #6a6a6a; padding-right: 10px; }
.lsearch input { flex: 1; width: 0; }
.layer { display: flex; align-items: center; height: 27px; background: #4d4d4d; padding: 0 0 2px 4px; flex: none; }
.layer i { width: 8px; height: 10px; background: #f4f4f4; clip-path: polygon(0 0, 100% 50%, 0 100%); margin-right: 11px; }
.layer .ic14 { margin: 0 2px; }

.doc { flex: 1; min-width: 0; display: flex; flex-direction: column; }
.doc::after { content: ""; height: 1px; margin: 1px 64px 0 155px; background: #606060; }
.dtabs { height: 28px; background: #252525; border: 1px solid #3c3c3c; flex: none; }
.dtabs button { display: flex; align-items: center; gap: 4px; height: 26px; padding: 0 10px 0 8px; background: #4a4a4a; color: #eee; font-size: 14px; }
.canvas { position: relative; flex: 1; min-height: 0; margin-top: 4px; background: #fff; display: flex; align-items: center; justify-content: center; }
#terrain { height: calc(100% - 36px); aspect-ratio: 836 / 765; display: block; }
.brand { position: absolute; right: 12px; bottom: 0; display: flex; flex-direction: column; align-items: flex-end; color: #fdfdfd; text-shadow: 1px 2px 3px #ccc; }
.brand svg { position: absolute; top: -8px; right: -6px; width: 100px; height: 20px; stroke: #f0f0f0; }
.brand circle { fill: #fff; }
.brand em { font: italic bold 30px/36px "Liberation Serif", serif; }
.brand b { font: italic bold 22px/24px "Liberation Mono", monospace; }
.right { width: 303px; padding-left: 4px; }
.right div { height: 28px; background: #252525; border: 1px solid #3c3c3c; }

.dialog { position: absolute; z-index: 3; top: 128px; right: 5px; width: 400px; height: 720px; background: #333; border: 2px solid #3f3f3f; }
.dtitle { display: flex; align-items: center; gap: 17px; height: 33px; padding: 0 17px 0 10px; }
.dtitle h2 { flex: 1; color: #999; padding-bottom: 2px; }
.dstrip { display: flex; height: 28px; padding: 1px 1px 3px; background: #252525; }
.dstrip button { width: 45px; height: 24px; }
.dstrip button + button { color: #bbb; }
.dstrip .on { background: #4a4a4a; color: #fff; font-weight: 700; }
.fields { padding: 0 15px 0 14px; }
.fields h3 { display: flex; align-items: center; height: 48px; margin-top: 4px; margin-right: -5px; padding-bottom: 2px; font-weight: 700; }
.fields h3:first-child { margin-top: 0; }
.fields h3::after { content: ""; flex: 1; height: 2px; background: #606060; margin-left: 16px; }
.fields .tri { margin-right: 9px; }
.row { display: flex; align-items: center; height: 27px; }
.row + .row { margin-top: 5px; }
.row label { width: 106px; padding-bottom: 2px; }
.row sup { color: #ec7063; font-size: 13px; line-height: 0; vertical-align: 2px; }
.row > input, .pick { flex: 1; height: 27px; border: 1px solid #6a6a6a; }
.row > input { padding-bottom: 2px; }
.pick { display: flex; align-items: center; padding: 0 4px 0 1px; }
.pick select { flex: 1; height: 24px; appearance: none; padding: 0 0 2px 2px; }
.run { display: flex; align-items: center; gap: 23px; height: 40px; margin-top: 14px; padding: 0 10px 0 11px; }
.bar { flex: 1; height: 14px; border-radius: 7px; background: #a0a0a0; border: 1px solid #8a8a8a; }
.mark-set { left: 101px; top: 134px; width: 296px; height: 48px; }
.mark-slope { left: -4px; top: 324px; width: 398px; height: 70px; }
.mark-run { left: 348px; top: 634px; width: 54px; height: 56px; }
.note-ref, .note-slope { font-size: 21px; }
.note-ref { left: 180px; top: 101px; }
.note-slope { left: 119px; top: 288px; }
.n4 { left: 228px; top: 189px; }
.n5 { left: 186px; top: 407px; }
.n6 { left: 367px; top: 705px; }
.credit { position: absolute; right: 13px; bottom: 7px; font-size: 18px; line-height: 24px; color: #bbb; }
```
FILE: terrain.js
```js
// Synthesises the elevation raster from ridge and valley lines (x, y, level triples).
const LINES = [
[665,190,0,560,170,0,480,150,.3,400,200,0,300,225,.3,250,280,2,200,330,2,130,370,1.5,20,395,2],
[450,30,2.5,455,100,2,465,150,1],[340,45,3.5,400,80,3,450,120,2],[200,105,4,260,140,2.5,300,180,2],
[20,210,4,70,235,3,110,270,2.500],[160,210,3,240,240,2],[620,130,1.5,540,110,2.5,500,120,2],
[480,290,3,510,360,4],[555,270,3.5,580,330,4],[130,420,3.5,60,440,4,50,480,5],[200,380,4,200,430,5],
[360,250,2,440,290,3],[640,210,2,660,240,3],[260,320,5],[310,290,4],[460,230,3.800],
[30,40,12,70,35,10,110,30,12.5,120,80,13.5,115,130,11.5,90,190,9.5],[120,130,11,180,160,10],
[260,40,12,270,90,9.5],[60,150,9.5,110,140,11],[20,120,6,30,180,6],[60,80,8],[20,330,6.2,20,280,6],[70,290,7],
[160,70,8,200,70,6],[320,60,7,330,80,6],[180,90,6],[200,170,5.5],[130,300,6,150,230,5.5],[600,90,6,640,40,6.5],[560,60,6.5,540,40,5],
[600,260,6,620,300,8,650,360,11],[640,250,7],[560,320,6.5],[540,380,6,490,400,6.5],
[30,440,8.5],[90,470,6,170,470,6.5,240,400,6],[270,330,6,380,340,6.5,460,340,5.5,480,430,7.5],
[280,435,13.6,340,470,14.3,368,490,15,390,450,14.8,440,430,13.6],[368,490,15,385,530,14],[355,400,12.5,380,440,14.3],[430,400,12.8],
[365,497,16.3],[280,590,7,230,510,6.5,200,450,7],[330,595,8.5,380,580,9.5],
[140,480,11,125,510,13,115,590,14.9,150,640,14.9,160,690,15,200,670,14.3,250,650,13.8,310,680,13.8,400,650,14.4,450,605,15.2,510,580,14,530,560,12.5],
[510,630,13,600,640,12.8,650,600,12.5],[160,700,15,230,740,13.5,300,750,13.3,350,790,13,400,810,12],
[150,700,15,100,740,14,110,820,13,125,880,12.8],[60,710,12.8,110,690,13.5],[210,800,13.5,260,850,12.5],
[20,580,12,80,575,12.5],[20,640,11,30,660,12],[20,820,11.5],[440,640,14,480,700,13,480,770,12],
[550,750,11.8,560,790,12,620,790,11,660,820,11],[560,650,11,640,680,11,700,710,12.5,740,770,11,780,790,10],
[570,440,12.8,590,500,12.8,600,560,13.3,640,600,12.8],
[600,570,13,700,575,13,760,570,13,850,580,13,900,560,13.2,940,520,13.6,990,470,14,1070,460,13],
[810,480,12,805,560,12.8],[705,500,11.5,705,570,13],[780,575,13,770,640,14.8,790,700,13],[850,580,13,900,630,12.6],[900,560,13,940,590,12],
[660,605,12,730,620,11],[650,500,8.5],[640,460,7.5],[540,510,8.5],[750,500,8.5],[860,480,8.5],[480,480,8.5,520,460,8],
[950,630,7,1000,590,6,1010,540,6.5],[1060,540,5,1110,500,4.3,1180,500,3],[1050,620,8],[960,570,6.8],[870,690,6,830,770,6],
[860,760,5,900,790,5,940,810,4.8],[930,700,12,960,740,12.2,990,765,12.2],[1010,790,10.5],[890,680,7.5],[1030,690,8,1000,660,8.5],
[1330,460,.3,1290,540,.8,1240,560,1.5,1180,480,2.5,1150,560,2.5,1130,640,2.5,1110,740,3,1070,810,3,1000,860,4,930,920,4.2,850,920,4.2,780,970,4.3,750,1020,5,760,1090,5.2],
[1240,560,1.5,1260,640,2.5],[1340,530,2,1400,520,4],[720,850,5,770,850,5,850,880,4.5],[1190,640,5,1170,620,5.5],
[1230,700,5.5,1190,760,5,1240,770,6],[1420,450,6],[1450,490,8.5],[1420,560,6,1340,600,6,1300,680,6],[1500,540,6,1530,480,6.5],
[1385,600,12,1370,670,12.7,1350,760,14.5,1330,800,15,1290,845,13.8,1220,890,13.8,1210,940,14.7,1150,990,14.9,1090,1000,15,1060,1050,15,1000,1130,14.3,950,1160,14.8,890,1210,13.8],
[1330,800,15,1370,840,13.3,1420,870,12.5],[1480,690,11,1440,700,12,1400,750,12.5],[1520,680,10],[1530,600,10,1460,590,9.5],
[1490,780,10],[1490,830,8],[1150,860,11.5,1220,880,13],[1060,940,12.5,1090,980,14.5],[1150,1060,14,1250,1020,13,1340,960,12],
[1532,760,3,1538,840,2.5],[1480,880,7],[1540,890,2,1460,910,3,1390,960,4,1380,1010,4.5,1310,1060,5,1290,1090,6],
[1470,920,4,1490,1000,5,1530,1040,6],[1520,960,9],[1440,1000,7],[1420,990,9],[1270,1100,6.5,1180,1110,7.5],[1110,1120,8.5],[1050,1160,9.5],
[1050,1210,13.5,1130,1200,15,1190,1200,14.5,1210,1260,15,1230,1290,15.5,1290,1310,15.7,1350,1330,15,1400,1300,14.5,1380,1270,13.5],
[1230,1288,16.8],[1290,1310,17],[1280,1170,12.8,1270,1240,14],[1400,1300,14.5,1470,1290,13,1520,1280,11.5],
[1370,1150,13,1400,1190,13,1440,1130,13,1500,1100,12],[1400,1190,13,1530,1150,11.5],[1380,1200,13,1380,1270,13.8],[1330,1220,10.5],
[1500,1060,9],[1410,1080,10],[1540,1330,8],[1480,1370,7,1420,1400,6.3,1300,1430,6.5],[1530,1400,3,1480,1450,4.5,1400,1480,4.5,1270,1500,5],[1380,1530,5.5],
[640,1400,11.5,720,1400,13,800,1425,14.8,860,1400,13.3,940,1395,14.2,960,1360,13.8,1030,1370,13.4,1100,1390,13.3,1180,1400,13.2,1240,1370,13.8],
[735,1260,10.5,735,1310,12,720,1380,12],[830,1300,10,880,1340,12],[520,1420,11,510,1490,11.5,500,1540,10.5],[600,1430,10],
[780,1480,10,800,1530,9],[620,1300,8.5,600,1380,8.5],[650,1220,6.5],[660,1350,8],[1120,1340,10.5],
[20,900,7,100,980,6.5,200,990,6.5,280,1010,6.8],[60,1010,5.5,80,1040,5.3],[30,1080,6,100,1090,6,60,1150,6.3,20,1200,6],
[40,970,9],[440,1000,7,460,1060,7,540,1080,7],[400,1040,7.3],[320,1060,10,300,1130,9.5],[190,1040,9],[160,1110,9],[240,1060,8],
[300,900,9.5],[350,960,8,400,950,8.5],[400,890,9,480,930,9.3],[480,980,10.8,560,960,9.8],[590,1110,12.8],[560,1110,10.5,630,1110,9.5],
[400,1150,10.5,450,1140,12,500,1130,10],[640,900,6.3,640,970,6.3],[700,1040,8.8,710,1080,8.8],[610,1000,8.5,660,990,8.5],[580,890,8.5,630,910,8.5],
[700,880,6,720,930,6],[690,1120,6.2,720,1180,6.3],[720,1180,6.3,650,1230,6.5],[760,1130,5.8,790,1190,6,830,1230,6.5,860,1260,7],
[570,1170,7.3,640,1160,7],[760,1290,8],[900,1290,7.5,980,1290,8],[1040,1290,9,1060,1330,9],[820,1110,6],[870,1070,8],[800,1040,6,900,1000,6.8],
[930,980,9],[1000,920,7],[150,1390,14.3,190,1330,14.6,240,1300,15.2,270,1300,15.6,330,1300,15.2,420,1290,14.9,490,1280,15.2,540,1320,14],
[272,1302,17],[270,1300,15.5,270,1230,15.2,310,1210,14.5,380,1210,13.8],[300,1320,15,300,1390,14],[80,1370,13,150,1390,14],[490,1280,15,490,1230,14],
[60,1250,12,40,1300,12.5],[20,1430,12],[480,1380,6.5,380,1420,6.5],[540,1390,7],[440,1420,3,390,1470,2.5,340,1520,1,330,1545,.5],
[270,1540,3,300,1480,3.5],[240,1450,6,230,1480,7],[40,1490,5.5,30,1530,4.5],[80,1450,8,100,1500,7],[170,1500,12,200,1520,12.7],[110,1300,10],
[430,1500,6,450,1540,6],[560,1480,7],[600,1540,3.5,660,1510,2.5,700,1530,3],[740,1540,5],[870,1540,3,940,1540,.7,1010,1470,1,1080,1500,2,1120,1470,2.3],
[900,1490,4.5],[850,1500,6],[1140,1540,7],[1200,1490,8.8,1180,1460,9],[1050,1435,7],[1200,1430,7.5],[1500,1500,8],[1520,1530,9],
[560,850,9.5],[620,860,9],[660,860,7.5],[150,850,10.5],[60,850,9],[180,920,10],[300,830,10.5],[340,860,9],[440,850,8],
[640,740,9],[700,790,7],[800,740,9.5],[840,650,10],[890,665,9],[20,460,10.5],[60,540,10.5],[180,560,10],[200,610,10],[280,620,10],
[560,580,10.5],[700,650,9],[440,800,9],[600,700,10],[40,760,10],[960,1050,10.5],[900,1120,10.5],[1000,1000,10.5],[1140,920,11]
];
const RAMP = [[184,246,208],[200,248,184],[222,251,178],[229,243,158],[164,218,108],[80,184,60],[28,152,48],[30,136,60],[96,148,52],[152,162,46],[208,176,32],[232,160,16],[220,112,0],[190,56,0],[130,12,0],[108,38,16],[136,88,72],[200,190,190]];

const hash = (a, b) => { const v = Math.sin(a * 127.1 + b * 311.7) * 43758.5453; return v - Math.floor(v); };
const ease = t => t * t * (3 - 2 * t);
function noise1(x, seed) {
  const i = Math.floor(x), t = ease(x - i);
  return (hash(i, seed) * (1 - t) + hash(i + 1, seed) * t) * 2 - 1;
}
function noise2(x, y, seed) {
  const i = Math.floor(x), j = Math.floor(y), u = ease(x - i), v = ease(y - j);
  const a = hash(i + seed, j), b = hash(i + 1 + seed, j), c = hash(i + seed, j + 1), d = hash(i + 1 + seed, j + 1);
  return (a + (b - a) * u + (c - a) * v + (a - b - c + d) * u * v) * 2 - 1;
}
function nearest(line, px, py) {
  let best = 1e12, level = line[2], along = 0, run = 0;
  if (line.length === 3) {
    const dx = px - line[0], dy = py - line[1];
    return [dx * dx + dy * dy, level, Math.atan2(dy, dx) * 20];
  }
  for (let k = 0; k + 5 < line.length; k += 3) {
    const ax = line[k], ay = line[k + 1], bx = line[k + 3] - ax, by = line[k + 4] - ay;
    const len = Math.hypot(bx, by);
    const raw = ((px - ax) * bx + (py - ay) * by) / (len * len);
    const t = Math.max(0, Math.min(1, raw));
    const dx = px - ax - bx * t, dy = py - ay - by * t, d = dx * dx + dy * dy;
    if (d < best) {
      best = d;
      level = line[k + 2] + (line[k + 5] - line[k + 2]) * t;
      const side = bx * dy - by * dx > 0 ? 1 : -1;
      const turn = raw === t ? 0 : Math.atan2((raw - t) * len, Math.sqrt(d)) * 30;
      along = run + len * t + turn + side * 5000;
    }
    run += len;
  }
  return [best, level, along];
}
function heightAt(x, y) {
  const px = x + noise2(x / 40, y / 40, 3) * 12 + noise2(x / 18, y / 18, 9) * 4;
  const py = y + noise2(x / 40, y / 40, 21) * 12 + noise2(x / 18, y / 18, 33) * 4;
  let sum = 0, total = 0;
  LINES.forEach((line, id) => {
    const [d2, level, along] = nearest(line, px, py);
    const d = Math.sqrt(d2);
    const w = 1 / Math.pow(d2 + 50, 1.6);
    const spur = ease(Math.min(1, d / 45)) * (level > 9 ? 2.6 : level > 5 ? 1.2 : 1.5);
    const slope = level > 11 ? Math.max(0, d - 12) * 0.05 : level < 5 ? -Math.max(0, d - 25) * 0.03 : 0;
    sum += w * (level - Math.max(-2, Math.min(3, slope)) + spur * noise1(along / 19, id));
    total += w;
  });
  return sum / total + noise2(x / 26, y / 26, 50) * 0.3;
}
const canvas = document.getElementById('terrain');
const ctx = canvas.getContext('2d');
const img = ctx.createImageData(canvas.width, canvas.height);
for (let r = 0; r < canvas.height; r++) {
  for (let c = 0; c < canvas.width; c++) {
    const h = heightAt(16 + (c + 0.5) / canvas.width * 1525, 22 + (r + 0.5) / canvas.height * 1526);
    const v = Math.max(0, Math.min(RAMP.length - 1.001, h)), i = Math.floor(v), t = v - i;
    const o = (r * canvas.width + c) * 4;
    for (let k = 0; k < 3; k++) img.data[o + k] = RAMP[i][k] + (RAMP[i + 1][k] - RAMP[i][k]) * t;
    img.data[o + 3] = 255;
  }
}
ctx.putImageData(img, 0, 0);
```
